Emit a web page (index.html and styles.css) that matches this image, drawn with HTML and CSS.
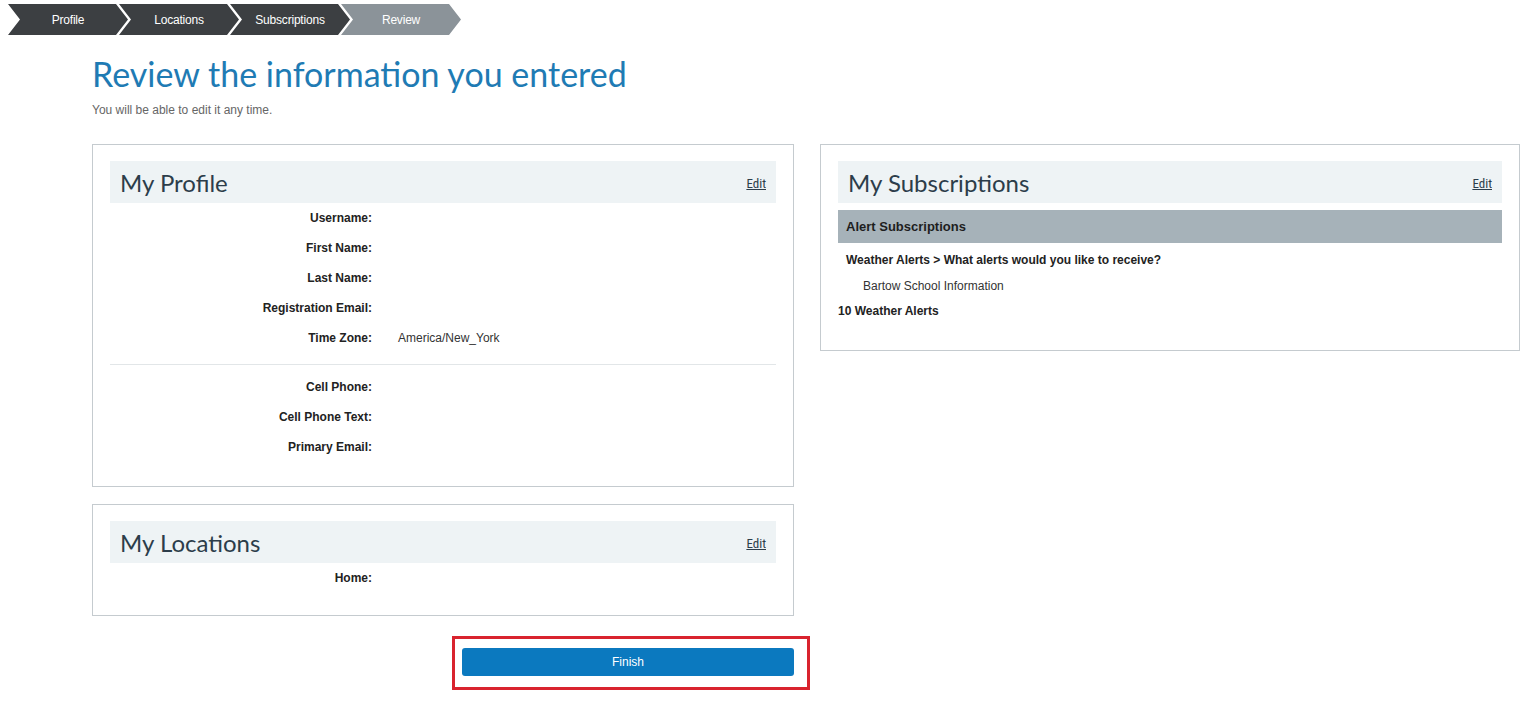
FILE: index.html
```html
<!DOCTYPE html>
<html lang="en">
<head>
    <meta charset="UTF-8">
    <meta name="viewport" content="width=device-width, initial-scale=1.0">
    <title>Review</title>
    <link rel="stylesheet" href="styles.css">
</head>
<body>
    <!-- Wizard steps -->
    <div class="steps">
        <div class="step first">Profile</div>
        <div class="step">Locations</div>
        <div class="step">Subscriptions</div>
        <div class="step current">Review</div>
    </div>

    <div class="page">
        <h1>Review the information you entered</h1>
        <p class="intro">You will be able to edit it any time.</p>

        <div class="columns">
            <div class="col">
                <!-- Profile -->
                <div class="card">
                    <div class="card-head">
                        <h2>My Profile</h2>
                        <a href="#" class="edit">Edit</a>
                    </div>
                    <div class="rows">
                        <div class="label">Username:</div><div class="value"></div>
                        <div class="label">First Name:</div><div class="value"></div>
                        <div class="label">Last Name:</div><div class="value"></div>
                        <div class="label">Registration Email:</div><div class="value"></div>
                        <div class="label">Time Zone:</div><div class="value">America/New_York</div>
                    </div>
                    <hr>
                    <div class="rows">
                        <div class="label">Cell Phone:</div><div class="value"></div>
                        <div class="label">Cell Phone Text:</div><div class="value"></div>
                        <div class="label">Primary Email:</div><div class="value"></div>
                    </div>
                </div>

                <!-- Locations -->
                <div class="card short">
                    <div class="card-head">
                        <h2>My Locations</h2>
                        <a href="#" class="edit">Edit</a>
                    </div>
                    <div class="rows">
                        <div class="label">Home:</div><div class="value"></div>
                    </div>
                </div>

                <div class="finish-row">
                    <div class="highlight">
                        <button>Finish</button>
                    </div>
                </div>
            </div>

            <div class="col">
                <!-- Subscriptions -->
                <div class="card subs">
                    <div class="card-head">
                        <h2>My Subscriptions</h2>
                        <a href="#" class="edit">Edit</a>
                    </div>
                    <div class="sub-bar">Alert Subscriptions</div>
                    <div class="sub-group">Weather Alerts &gt; What alerts would you like to receive?</div>
                    <div class="sub-item">Bartow School Information</div>
                    <div class="sub-total">10 Weather Alerts</div>
                </div>
            </div>
        </div>
    </div>
</body>
</html>
```

FILE: styles.css
```css
body {
    margin: 0;
    font-family: "Liberation Sans", Arial, sans-serif;
    font-size: 12px;
    color: #222;
    background-color: #fff;
}

.steps {
    display: flex;
    padding: 4px 0 0 8px;
}

.step {
    width: 120px;
    height: 31px;
    margin-left: -9px;
    display: flex;
    align-items: center;
    justify-content: center;
    box-sizing: border-box;
    color: #fff;
    font-size: 12px;
    letter-spacing: -0.2px;
    background-color: #3c3f42;
    clip-path: polygon(0 0, calc(100% - 12px) 0, 100% 50%, calc(100% - 12px) 100%, 0 100%, 12px 50%);
}

.step.first {
    margin-left: 0;
}

.step.current {
    background-color: #8b9399;
}

.page {
    padding: 0 16px 0 92px;
}

h1 {
    margin: 18px 0 0;
    font-family: Lato, sans-serif;
    font-weight: normal;
    font-size: 34px;
    line-height: 42px;
    color: #1f7bb4;
}

.intro {
    margin: 7px 0 0;
    color: #666;
    font-size: 12px;
    line-height: 16px;
}

.columns {
    display: grid;
    grid-template-columns: 702px 700px;
    column-gap: 26px;
    margin-top: 26px;
    align-items: start;
}

.card {
    border: 1px solid #c5cbcf;
    padding: 16px 17px 24px;
    margin-bottom: 17px;
}

.card.short {
    padding-bottom: 22px;
    margin-bottom: 0;
}

.card-head {
    display: flex;
    align-items: center;
    justify-content: space-between;
    height: 42px;
    padding: 0 10px;
    background-color: #eef3f5;
}

.card-head h2 {
    margin: 0;
    font-family: Lato, sans-serif;
    font-weight: normal;
    font-size: 24px;
    color: #2c3d4a;
}

.edit {
    margin-top: 2px;
    font-family: "Liberation Sans Narrow", "Roboto Condensed", Roboto, sans-serif;
    font-size: 13px;
    color: #2c3d4a;
}

.rows {
    display: grid;
    grid-template-columns: 262px 1fr;
    column-gap: 26px;
}

.label,
.value {
    height: 30px;
    line-height: 30px;
}

.label {
    text-align: right;
    font-weight: bold;
    color: #222;
}

.value {
    color: #333;
}

hr {
    border: none;
    border-top: 1px solid #e2e6e8;
    margin: 11px 0 7px;
}

.subs {
    padding-bottom: 31px;
}

.sub-bar {
    margin-top: 7px;
    height: 33px;
    line-height: 33px;
    padding-left: 8px;
    background-color: #a6b2b9;
    font-weight: bold;
    font-size: 13px;
    color: #1e1e1e;
}

.sub-group {
    margin-top: 9px;
    padding-left: 8px;
    font-weight: bold;
    line-height: 16px;
}

.sub-item {
    margin-top: 10px;
    padding-left: 25px;
    color: #333;
    line-height: 16px;
}

.sub-total {
    margin-top: 9px;
    font-weight: bold;
    line-height: 16px;
}

.finish-row {
    padding: 20px 0 0 360px;
}

.highlight {
    width: 358px;
    box-sizing: border-box;
    border: 3px solid #d9232e;
    padding: 9px 13px 11px 7px;
}

.highlight button {
    display: block;
    width: 100%;
    height: 28px;
    border: none;
    border-radius: 3px;
    background-color: #0b79bf;
    color: #fff;
    font-family: "Liberation Sans", Arial, sans-serif;
    font-size: 12px;
    cursor: pointer;
}
```
